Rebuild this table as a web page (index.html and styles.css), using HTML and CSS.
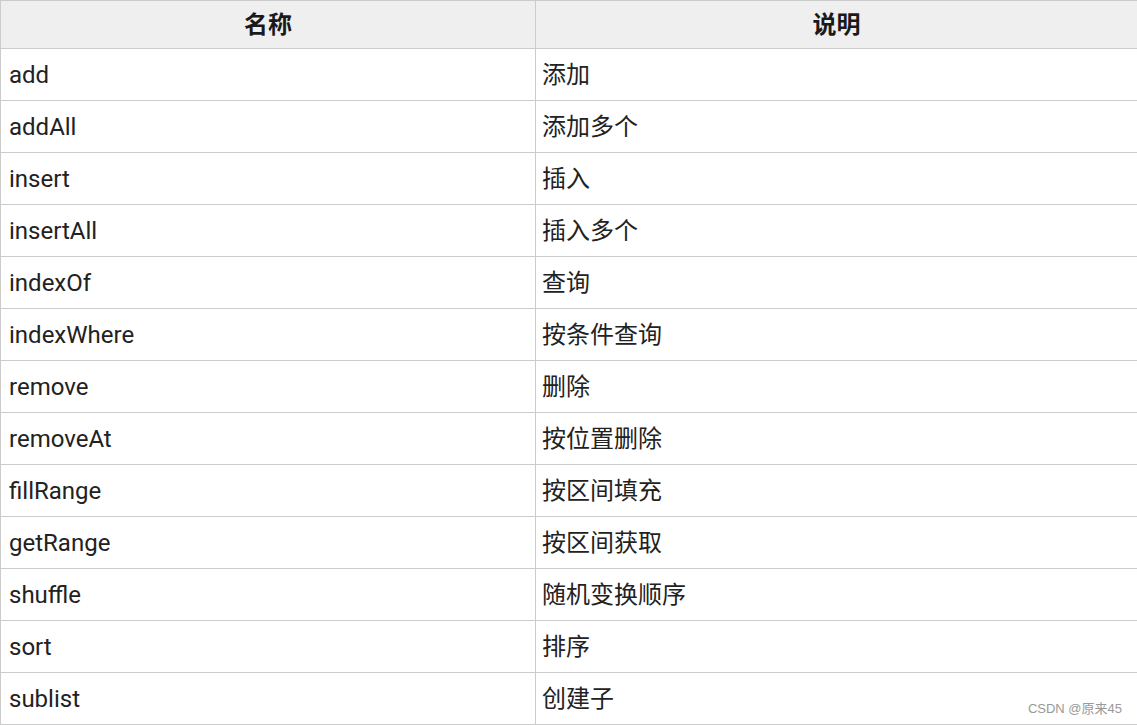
FILE: index.html
```html
<!DOCTYPE html>
<html lang="zh">
<head>
<meta charset="utf-8">
<link rel="stylesheet" href="styles.css">
</head>
<body>
<div class="wrap">
<table class="tbl">
<colgroup><col class="c1"><col class="c2"></colgroup>
<thead>
<tr><th>名称</th><th>说明</th></tr>
</thead>
<tbody>
<tr><td>add</td><td>添加</td></tr>
<tr><td>addAll</td><td>添加多个</td></tr>
<tr><td>insert</td><td>插入</td></tr>
<tr><td>insertAll</td><td>插入多个</td></tr>
<tr><td>indexOf</td><td>查询</td></tr>
<tr><td>indexWhere</td><td>按条件查询</td></tr>
<tr><td>remove</td><td>删除</td></tr>
<tr><td>removeAt</td><td>按位置删除</td></tr>
<tr><td>fillRange</td><td>按区间填充</td></tr>
<tr><td>getRange</td><td>按区间获取</td></tr>
<tr><td>shuffle</td><td>随机变换顺序</td></tr>
<tr><td>sort</td><td>排序</td></tr>
<tr><td>sublist</td><td>创建子</td></tr>
</tbody>
</table>
<div class="mark">CSDN @原来45</div>
</div>
</body>
</html>
```
FILE: styles.css
```css
html, body {
  margin: 0;
  padding: 0;
  background: #fff;
}
.wrap {
  position: relative;
  width: 1137px;
  height: 725px;
  overflow: hidden;
}
.tbl {
  border-collapse: collapse;
  table-layout: fixed;
  width: 1137px;
  font-family: Roboto, "Noto Sans CJK SC", sans-serif;
  font-size: 24px;
  line-height: 36px;
  color: #222;
}
.c1 { width: 535px; }
.c2 { width: 602px; }
.tbl th, .tbl td {
  border: 1px solid #ccc;
  padding: 0 8px;
  white-space: nowrap;
}
.tbl td + td {
  padding-left: 6px;
}
.tbl th {
  height: 47px;
  background: #efefef;
  font-weight: bold;
  text-align: center;
  color: #1a1a1a;
}
.tbl td {
  height: 51px;
  text-align: left;
}
.mark {
  position: absolute;
  right: 15px;
  bottom: 8px;
  font-family: "Liberation Sans", "Noto Sans CJK SC", sans-serif;
  font-size: 13px;
  line-height: 16px;
  color: #999;
}
```
